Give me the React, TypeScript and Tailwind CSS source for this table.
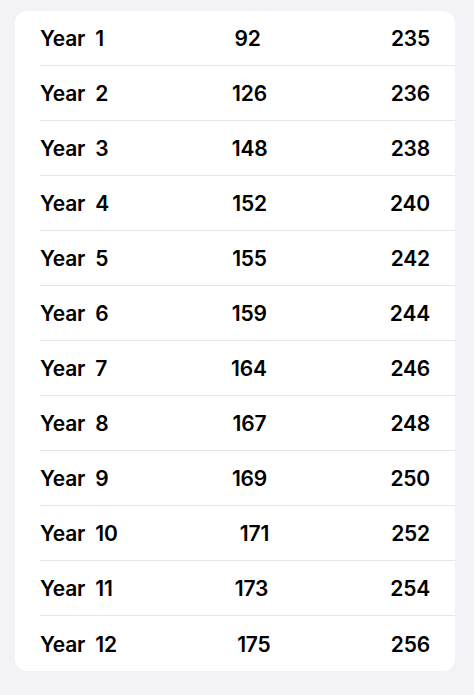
const rows: [string, number, number][] = [
  ['Year  1', 92, 235],
  ['Year  2', 126, 236],
  ['Year  3', 148, 238],
  ['Year  4', 152, 240],
  ['Year  5', 155, 242],
  ['Year  6', 159, 244],
  ['Year  7', 164, 246],
  ['Year  8', 167, 248],
  ['Year  9', 169, 250],
  ['Year  10', 171, 252],
  ['Year  11', 173, 254],
  ['Year  12', 175, 256],
];

export default function App() {
  return (
    <div
      className="min-h-[695px] w-[474px] bg-[#f2f2f7] pt-[11px] pl-[15px] pr-[19px]"
      style={{ fontFamily: 'Inter, "Noto Sans", sans-serif' }}
    >
      <div className="bg-white rounded-[12px] overflow-hidden">
        {rows.map(([label, a, b], i) => (
          <div key={label} className="pl-[25px]">
            <div
              className={`h-[55px] flex items-center justify-between pr-[25px] pt-[2px] text-[21px] font-semibold tracking-[-0.2px] text-black ${
                i < rows.length - 1 ? 'border-b border-[#e5e5ea]' : ''
              }`}
            >
              <span className="whitespace-pre">{label}</span>
              <span>{a}</span>
              <span>{b}</span>
            </div>
          </div>
        ))}
      </div>
    </div>
  );
}
